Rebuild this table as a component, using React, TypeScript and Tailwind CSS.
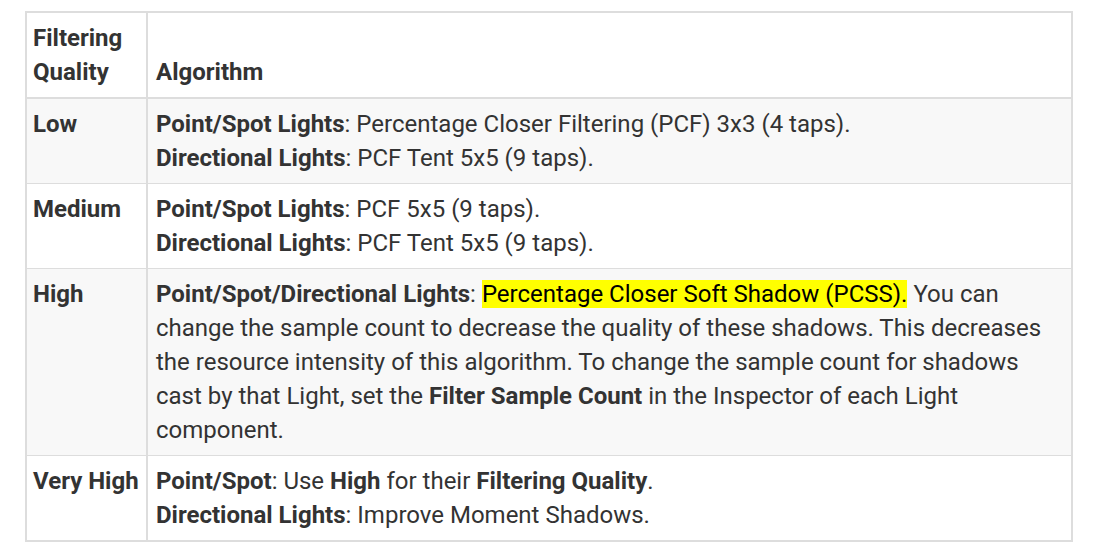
const rows = [
  {
    q: "Low",
    body: (
      <>
        <b className="font-bold">Point/Spot Lights</b>: Percentage Closer Filtering (PCF) 3x3 (4 taps).
        <br />
        <b className="font-bold">Directional Lights</b>: PCF Tent 5x5 (9 taps).
      </>
    ),
  },
  {
    q: "Medium",
    body: (
      <>
        <b className="font-bold">Point/Spot Lights</b>: PCF 5x5 (9 taps).
        <br />
        <b className="font-bold">Directional Lights</b>: PCF Tent 5x5 (9 taps).
      </>
    ),
  },
  {
    q: "High",
    body: (
      <>
        <b className="font-bold">Point/Spot/Directional Lights</b>:{" "}
        <span className="bg-[#ffff00] text-black">Percentage Closer Soft Shadow (PCSS).</span> You can change the
        sample count to decrease the quality of these shadows. This decreases the resource intensity of this
        algorithm. To change the sample count for shadows cast by that Light, set the{" "}
        <b className="font-bold">Filter Sample Count</b> in the Inspector of each Light component.
      </>
    ),
  },
  {
    q: "Very High",
    body: (
      <>
        <b className="font-bold">Point/Spot</b>: Use <b className="font-bold">High</b> for their{" "}
        <b className="font-bold">Filtering Quality</b>.
        <br />
        <b className="font-bold">Directional Lights</b>: Improve Moment Shadows.
      </>
    ),
  },
];

export default function App() {
  return (
    <div className="bg-white w-[1095px] h-[550px] pt-[11px] pl-[25px] font-['Roboto',sans-serif] text-[24px] leading-[34px] text-[#333]">
      <table className="w-[1048px] border-collapse border-2 border-[#ddd]">
        <thead>
          <tr className="bg-white">
            <th className="w-[121px] border-2 border-[#ddd] pl-[6px] pr-[5px] py-[8px] text-left align-bottom font-bold">
              Filtering Quality
            </th>
            <th className="border-2 border-[#ddd] pl-[8px] pr-2 py-[8px] text-left align-bottom font-bold">Algorithm</th>
          </tr>
        </thead>
        <tbody>
          {rows.map((r, i) => (
            <tr key={r.q} className={i % 2 === 0 ? "bg-[#f8f8f8]" : "bg-white"}>
              <td className="border border-l-2 border-r-2 border-[#ddd] pl-[6px] pr-[5px] py-[8px] align-top font-bold whitespace-nowrap">
                {r.q}
              </td>
              <td className="border border-[#ddd] border-r-2 pl-[8px] pr-2 py-[8px] align-top">{r.body}</td>
            </tr>
          ))}
        </tbody>
      </table>
    </div>
  );
}
